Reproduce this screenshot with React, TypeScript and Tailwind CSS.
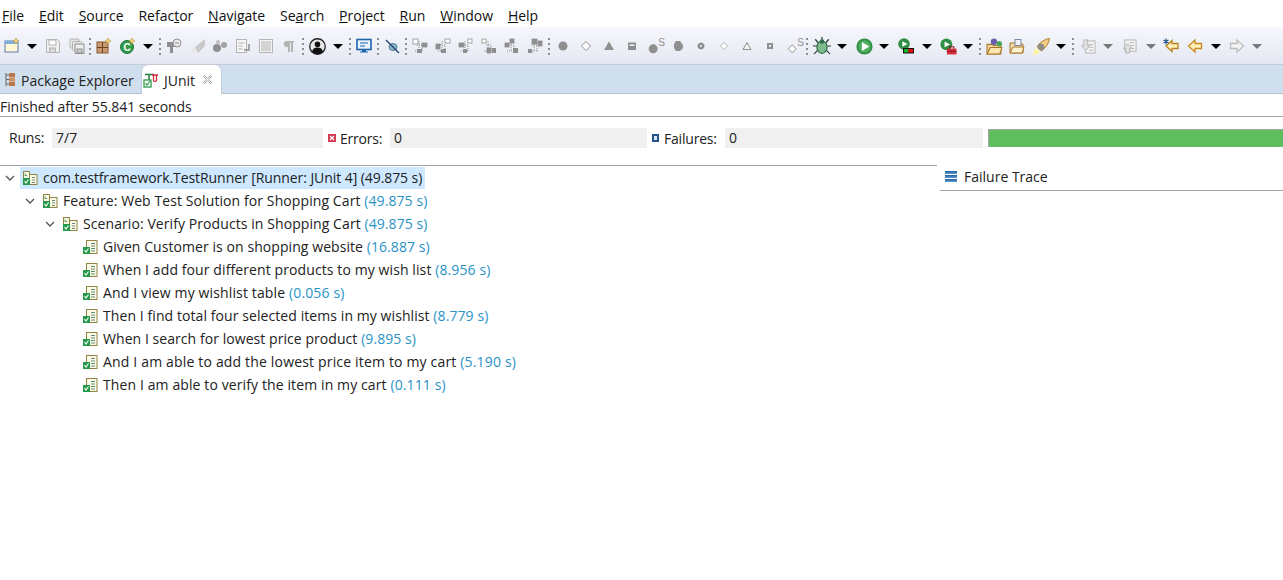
import type { ReactNode } from 'react';

const font = { fontFamily: '"Open Sans", "Noto Sans", sans-serif' };

function Ic({ children, size = 16 }: { children: ReactNode; size?: number }) {
  return (
    <svg width={size} height={size} viewBox="0 0 16 16" className="shrink-0 block">
      {children}
    </svg>
  );
}

// each slot runs from the left edge of its item to the left edge of the next one
function Slot({ w, children }: { w: string; children?: ReactNode }) {
  return <div className={`${w} shrink-0 h-full flex items-center justify-start`}>{children}</div>;
}

function Sep({ w }: { w: string }) {
  return (
    <Slot w={w}>
      <div className="flex flex-col gap-[3px] shrink-0">
        <div className="w-[2px] h-[2px] bg-[#8f8f8f]" />
        <div className="w-[2px] h-[2px] bg-[#8f8f8f]" />
        <div className="w-[2px] h-[2px] bg-[#8f8f8f]" />
        <div className="w-[2px] h-[2px] bg-[#8f8f8f]" />
      </div>
    </Slot>
  );
}

function Drop({ w, off }: { w: string; off?: boolean }) {
  return (
    <Slot w={w}>
      <svg width="10" height="5" viewBox="0 0 10 5" className="shrink-0">
        <path d="M0 0h10L5 5z" fill={off ? '#777777' : '#000000'} />
      </svg>
    </Slot>
  );
}

const Star = ({ x = 12, y = 3 }: { x?: number; y?: number }) => (
  <path
    d={`M${x} ${y - 3}l1 2 2 1-2 1-1 2-1-2-2-1 2-1z`}
    fill="#f7d774"
    stroke="#b9934a"
    strokeWidth=".6"
  />
);

const gray = '#b4b4b4';
const dark = '#8f8f8f';

const NewWin = () => (
  <Ic>
    <rect x="1" y="3" width="13" height="11" fill="#fff8d8" stroke="#5c7fa8" />
    <rect x="1" y="3" width="13" height="3" fill="#7fb0dc" />
    <Star />
  </Ic>
);
const Save = () => (
  <Ic>
    <path d="M1.500 1.500h11l2 2v11h-13z" fill="#f0f0f0" stroke={gray} />
    <rect x="4" y="2" width="7" height="5" fill="#fff" stroke={gray} />
    <rect x="4.500" y="10" width="6" height="4.500" fill="#d8d8d8" stroke={gray} />
  </Ic>
);
const SaveAll = () => (
  <Ic>
    <rect x="1" y="1" width="9" height="9" rx="1" fill="#e6e6e6" stroke={gray} />
    <rect x="3.500" y="3.500" width="9" height="9" rx="1" fill="#e6e6e6" stroke={gray} />
    <path d="M6 6h9v9.500H6z" fill="#eeeeee" stroke={dark} />
    <rect x="8" y="11" width="5" height="4" fill="#cccccc" stroke={dark} />
  </Ic>
);
const NewPkg = () => (
  <Ic>
    <rect x="1" y="4" width="11" height="11" fill="#c79a72" stroke="#8c5a33" />
    <path d="M1 9.500h11M6.500 4v11" stroke="#70401f" />
    <Star />
  </Ic>
);
const NewClass = () => (
  <Ic>
    <circle cx="7" cy="9" r="6.500" fill="#2f9a4b" stroke="#1c7a38" />
    <text x="7" y="12.500" textAnchor="middle" fontSize="10" fontWeight="700" fill="#fff" fontFamily="Liberation Sans">
      C
    </text>
    <Star />
  </Ic>
);
const Tip = () => (
  <Ic>
    <path d="M1 4h9v5H7v6H4V9H1z" fill={dark} />
    <circle cx="11" cy="5" r="4" fill="#e8e8e8" stroke={dark} />
    <path d="M9 5h4" stroke={dark} />
  </Ic>
);
const Eraser = () => (
  <Ic>
    <path d="M0 15l5-6 10-8v7l-7 7z" fill="#c9c9c9" />
    <path d="M5 9l3 6H0z" fill="#e9e9e9" />
  </Ic>
);
const Blobs = () => (
  <Ic>
    <circle cx="5" cy="10" r="4" fill={dark} />
    <circle cx="12" cy="7" r="3" fill="#a3a3a3" />
    <circle cx="6" cy="4" r="2" fill="#bcbcbc" />
  </Ic>
);
const DocArrow = () => (
  <Ic>
    <rect x="1.500" y="1.500" width="10" height="13" fill="#f6f6f6" stroke={gray} />
    <path d="M3.500 5h6M3.500 8h4M3.500 11h4" stroke={gray} />
    <path d="M9 12h5V6" fill="none" stroke={dark} strokeWidth="1.500" />
  </Ic>
);
const DocBox = () => (
  <Ic>
    <rect x="1.500" y="1.500" width="13" height="13" fill="#f4f4f4" stroke={gray} />
    <rect x="4" y="4" width="8" height="8" fill="none" stroke={gray} />
    <path d="M5 6h6M5 8h6M5 10h6" stroke={gray} />
  </Ic>
);
const Pilcrow = () => (
  <Ic>
    <path d="M5 3h8v1.500h-1V14h-2V4.500H9V14H7V9a3 3 0 0 1-2-6z" fill={gray} />
  </Ic>
);
const Avatar = () => (
  <Ic size={17}>
    <circle cx="8" cy="8" r="7.300" fill="#e8e8e8" stroke="#222" strokeWidth="1.200" />
    <circle cx="8" cy="6" r="2.600" fill="#111" />
    <path d="M2.800 13a5.300 5 0 0 1 10.400 0A7 7 0 0 1 2.800 13z" fill="#111" />
  </Ic>
);
const Monitor = () => (
  <Ic>
    <rect x="1" y="1.500" width="14" height="10" fill="#eaf2fb" stroke="#1d64a8" strokeWidth="1.600" />
    <path d="M4 5h8M4 8h5" stroke="#1d64a8" />
    <path d="M6 12h4v1.500h2v1H4v-1h2z" fill="#1d64a8" />
  </Ic>
);
const NoLink = () => (
  <Ic>
    <ellipse cx="9" cy="9" rx="4" ry="3.500" fill="#8fb7cc" stroke="#4f7f9a" />
    <path d="M2 2l13 13" stroke="#1f3f70" strokeWidth="1.300" />
  </Ic>
);

const hierBoxes = [
  [1, 1, 5, 5, 10, 5, 5, 4, 5, 11, 5, 4],
  [1, 6, 4, 5, 10, 1, 5, 4, 6, 11, 5, 4],
  [10, 1, 4, 4, 1, 5, 5, 4, 5, 11, 4, 4],
  [1, 1, 4, 4, 6, 10, 4, 5, 11, 10, 4, 5],
  [6, 1, 4, 4, 1, 5, 4, 4, 9, 10, 5, 5],
  [5, 1, 5, 5, 11, 3, 4, 5, 1, 11, 4, 4],
];

const Hier = ({ v }: { v: number }) => {
  const b = hierBoxes[v];
  return (
    <Ic>
      <path d="M5 7h5v6M7 3v10M3 13h8" fill="none" stroke={dark} strokeDasharray="1 1" />
      <rect x={b[0]} y={b[1]} width={b[2]} height={b[3]} fill={v === 0 || v === 3 || v === 2 ? '#fff' : dark} stroke={dark} strokeWidth=".8" />
      <rect x={b[4]} y={b[5]} width={b[6]} height={b[7]} fill={v === 1 ? '#fff' : dark} stroke={dark} strokeWidth=".8" />
      <rect x={b[8]} y={b[9]} width={b[10]} height={b[11]} fill={dark} />
    </Ic>
  );
};
const Bug = () => (
  <Ic size={18}>
    <path d="M2 2l4 5M14 2l-4 5M0 8h4M16 8h-4M1 15l4-4M15 15l-4-4M8 0v3" stroke="#2b3f36" strokeWidth="1.100" />
    <ellipse cx="8" cy="9" rx="4.500" ry="5.500" fill="#7fb98c" stroke="#2b6b45" />
    <circle cx="8" cy="4" r="2" fill="#2f6d4a" />
  </Ic>
);
const RunBig = () => (
  <Ic size={17}>
    <circle cx="8" cy="8" r="7.600" fill="#2f8f45" />
    <circle cx="8" cy="8" r="5.800" fill="#4fae5f" />
    <path d="M5.500 3.800L12.500 8l-7 4.200z" fill="#fff" />
  </Ic>
);
const RunCov = () => (
  <Ic>
    <circle cx="6" cy="6" r="5.800" fill="#2f8f45" />
    <path d="M4.300 3.200L9.500 6l-5.200 2.800z" fill="#fff" />
    <rect x="5" y="10" width="11" height="5.500" fill="#111" />
    <rect x="6" y="11" width="4.500" height="3.500" fill="#17b52c" />
    <rect x="10.500" y="11" width="4.500" height="3.500" fill="#e01010" />
  </Ic>
);
const RunTool = () => (
  <Ic size={17}>
    <circle cx="6" cy="6" r="5.600" fill="#2f8f45" />
    <path d="M4.300 3.200L9.500 6l-5.200 2.800z" fill="#fff" />
    <rect x="6.500" y="10" width="9" height="5.500" fill="#d62f3e" />
    <path d="M9 10V8.300h4V10M6.500 12.500h9" fill="none" stroke="#8f1020" />
  </Ic>
);
const FolderOrb = () => (
  <Ic size={17}>
    <path d="M1 6h5l1 1h7v8H1z" fill="#f5d79a" stroke="#a87626" />
    <path d="M1 15l3-6h11l-2 6z" fill="#fbe4ad" stroke="#a87626" />
    <circle cx="7.500" cy="3.500" r="3" fill="#6a5fb0" />
    <circle cx="12.500" cy="5.500" r="2.600" fill="#4ea35a" />
  </Ic>
);
const FolderOpen = () => (
  <Ic>
    <path d="M1 5h5l1 1h7v9H1z" fill="#f5dcae" stroke="#a87626" />
    <rect x="6" y="1.500" width="6" height="6" fill="#eef2f8" stroke="#7c8aa8" />
    <path d="M1 15l3-6h11l-2 6z" fill="#fdf0d0" stroke="#a87626" />
  </Ic>
);
const Rocket = () => (
  <Ic size={17}>
    <path d="M15.500 .5c-4.500 .5-8 3-11.500 7.500l4 4c4.500-3.500 7-7 7.500-11.500z" fill="#f4cf88" stroke="#b9873a" />
    <circle cx="7.500" cy="8.500" r="3" fill="#8c8c8c" />
    <path d="M0 16c0-3 1-5 3.500-6.500l3 3c-1.500 2.500-3.500 3.500-6.500 3.500z" fill="#fff2a8" />
  </Ic>
);
const DownDoc = () => (
  <Ic size={15}>
    <rect x="5" y="2" width="10" height="13" fill="#f2f2f2" stroke={gray} />
    <path d="M8 6h5M9 9h4M9 12h4" stroke={gray} />
    <path d="M3 1h4v6h2.500L5 12 .5 7H3z" fill="#e2e2e2" stroke={gray} />
  </Ic>
);
const UpDoc = () => (
  <Ic size={15}>
    <rect x="3" y="1" width="12" height="12" fill="#f2f2f2" stroke={gray} />
    <path d="M8 4h5M9 7h4M9 10h4" stroke={gray} />
    <path d="M4 15V10H1.500L6 5l4.500 5H8v5z" fill="#e2e2e2" stroke={gray} />
  </Ic>
);
const Arrow = ({ fill, stroke, flip }: { fill: string; stroke: string; flip?: boolean }) => (
  <Ic>
    <path
      d={flip ? 'M1.500 5.500H8V2l6.500 6L8 14v-3.500H1.500z' : 'M14.500 5.500H8V2L1.500 8 8 14v-3.500h6.500z'}
      fill={fill}
      stroke={stroke}
      strokeWidth="1.300"
    />
  </Ic>
);
const ArrowStar = () => (
  <Ic>
    <path d="M15 5.500H9V2.500L3 8l6 5.500v-3h6z" fill="#fff0b8" stroke="#b9821e" strokeWidth="1.300" />
    <path d="M3 .5v6M.5 2l5 3M5.500 2l-5 3" stroke="#1f4f86" strokeWidth="1.100" />
  </Ic>
);

const marks: ReactNode[] = [
  <circle key="a" cx="8" cy="8" r="4.500" fill={dark} />,
  <path key="b" d="M8 3.500L12.500 8 8 12.500 3.500 8z" fill="#fff" stroke={dark} />,
  <path key="c" d="M8 3.500l5 8.500H3z" fill={dark} />,
  <path key="d" d="M4 4.500h8v7.500H4z M5.500 6.500v1.500h5V6.500z" fill={dark} fillRule="evenodd" />,
];
const smalls: ReactNode[] = [
  <path key="e" d="M4 6l2-3 4 0 3 4v3l-3 3-4 0-2-3z" fill={dark} />,
  <path key="f" d="M8 4.500a3.500 3.500 0 1 0 .01 0zM8 7a1 1 0 1 1-.01 0z" fill={dark} fillRule="evenodd" />,
  <path key="g" d="M8 4.500L11.500 8 8 11.500 4.500 8z" fill="#fff" stroke={gray} />,
  <path key="h" d="M8 4.500L12 11.500H4z" fill="#f3f3f3" stroke={dark} />,
  <path key="i" d="M5 5h6v6H5z M7 7v2h2V7z" fill={dark} fillRule="evenodd" />,
];

function SIcon({ solid }: { solid?: boolean }) {
  return (
    <Ic size={18}>
      {solid ? (
        <circle cx="5.500" cy="10.500" r="4" fill={dark} />
      ) : (
        <path d="M5.500 7L9 10.500 5.500 14 2 10.500z" fill="#fff" stroke={gray} />
      )}
      <text x="10" y="8" fontSize="9" fill={dark} fontFamily="Liberation Sans">
        S
      </text>
    </Ic>
  );
}

function Toolbar() {
  return (
    <div className="h-[38px] pl-[4px] pt-[1px] flex items-center border-b border-[#c6cad4] bg-gradient-to-b from-[#f6f7fc] to-[#e5e8f3] overflow-hidden">
      <Slot w="w-[23px]"><NewWin /></Slot>
      <Drop w="w-[18px]" />
      <Slot w="w-[24px]"><Save /></Slot>
      <Slot w="w-[20px]"><SaveAll /></Slot>
      <Sep w="w-[7px]" />
      <Slot w="w-[24px]"><NewPkg /></Slot>
      <Slot w="w-[23px]"><NewClass /></Slot>
      <Drop w="w-[16px]" />
      <Sep w="w-[7px]" />
      <Slot w="w-[24px]"><Tip /></Slot>
      <Slot w="w-[22px]"><Eraser /></Slot>
      <Slot w="w-[23px]"><Blobs /></Slot>
      <Slot w="w-[23px]"><DocArrow /></Slot>
      <Slot w="w-[23px]"><DocBox /></Slot>
      <Slot w="w-[21px]"><Pilcrow /></Slot>
      <Sep w="w-[7px]" />
      <Slot w="w-[24px]"><Avatar /></Slot>
      <Drop w="w-[16px]" />
      <Sep w="w-[7px]" />
      <Slot w="w-[21px]"><Monitor /></Slot>
      <Sep w="w-[7px]" />
      <Slot w="w-[21px]"><NoLink /></Slot>
      <Sep w="w-[7px]" />
      <Slot w="w-[23px]"><Hier v={0} /></Slot>
      <Slot w="w-[23px]"><Hier v={1} /></Slot>
      <Slot w="w-[23px]"><Hier v={2} /></Slot>
      <Slot w="w-[23px]"><Hier v={3} /></Slot>
      <Slot w="w-[23px]"><Hier v={4} /></Slot>
      <Slot w="w-[21px]"><Hier v={5} /></Slot>
      <Sep w="w-[7px]" />
      <Slot w="w-[23px]"><Ic>{marks[0]}</Ic></Slot>
      <Slot w="w-[23px]"><Ic>{marks[1]}</Ic></Slot>
      <Slot w="w-[23px]"><Ic>{marks[2]}</Ic></Slot>
      <Slot w="w-[23px]"><Ic>{marks[3]}</Ic></Slot>
      <Slot w="w-[23px]"><SIcon solid /></Slot>
      <Slot w="w-[23px]"><Ic>{smalls[0]}</Ic></Slot>
      <Slot w="w-[23px]"><Ic>{smalls[1]}</Ic></Slot>
      <Slot w="w-[23px]"><Ic>{smalls[2]}</Ic></Slot>
      <Slot w="w-[23px]"><Ic>{smalls[3]}</Ic></Slot>
      <Slot w="w-[24px]"><Ic>{smalls[4]}</Ic></Slot>
      <Slot w="w-[20px]"><SIcon /></Slot>
      <Sep w="w-[7px]" />
      <Slot w="w-[24px]"><Bug /></Slot>
      <Drop w="w-[19px]" />
      <Slot w="w-[23px]"><RunBig /></Slot>
      <Drop w="w-[19px]" />
      <Slot w="w-[24px]"><RunCov /></Slot>
      <Drop w="w-[18px]" />
      <Slot w="w-[23px]"><RunTool /></Slot>
      <Drop w="w-[16px]" />
      <Sep w="w-[7px]" />
      <Slot w="w-[23px]"><FolderOrb /></Slot>
      <Slot w="w-[24px]"><FolderOpen /></Slot>
      <Slot w="w-[23px]"><Rocket /></Slot>
      <Drop w="w-[16px]" />
      <Sep w="w-[9px]" />
      <Slot w="w-[22px]"><DownDoc /></Slot>
      <Drop w="w-[19px]" off />
      <Slot w="w-[24px]"><UpDoc /></Slot>
      <Drop w="w-[17px]" off />
      <Slot w="w-[24px]"><ArrowStar /></Slot>
      <Slot w="w-[24px]"><Arrow fill="#fff0b8" stroke="#c98a1e" /></Slot>
      <Drop w="w-[18px]" />
      <Slot w="w-[23px]"><Arrow fill="#f4f4f4" stroke="#bdbdbd" flip /></Slot>
      <Drop w="w-[20px]" off />
    </div>
  );
}

const Menu = () => (
  <div className="h-[27px] pt-[3px] flex items-center pl-[2px] gap-[14.8px] text-[14px] text-[#111]">
    <span><u>F</u>ile</span>
    <span><u>E</u>dit</span>
    <span><u>S</u>ource</span>
    <span>Refac<u>t</u>or</span>
    <span><u>N</u>avigate</span>
    <span>Se<u>a</u>rch</span>
    <span><u>P</u>roject</span>
    <span><u>R</u>un</span>
    <span><u>W</u>indow</span>
    <span><u>H</u>elp</span>
  </div>
);

const JUnitIcon = () => (
  <Ic>
    <path d="M2 2.500h9M6 2.500V8" stroke="#2d7d46" strokeWidth="1.500" />
    <rect x="1" y="8" width="7" height="7" fill="#fff" stroke="#2f9a4b" strokeWidth="1.300" />
    <path d="M2.500 11.500l1.500 1.500 3-4" fill="none" stroke="#2f9a4b" strokeWidth="1.200" />
    <path d="M9 3h6M10.500 3v5a1.500 1.500 0 0 0 3 0V3" fill="none" stroke="#d22d3d" strokeWidth="1.300" />
  </Ic>
);

const Tabs = () => (
  <div className="h-[29px] flex items-stretch bg-[#d0dfee] border-b border-[#b7c2d1] text-[14px] text-[#222]">
    <div className="w-[141px] flex items-center pl-[5px] gap-[6px]">
      <svg width="10" height="13" viewBox="0 0 10 13" className="shrink-0">
        <path d="M1 0v13M1 2h3M1 6.500h3M1 11h3" stroke="#666" />
        <rect x="4" y="0" width="6" height="4" fill="#b5784a" />
        <rect x="4" y="4.500" width="6" height="4" fill="#c98f5e" />
        <rect x="4" y="9" width="6" height="4" fill="#b5784a" />
      </svg>
      <span className="pt-[2px] tracking-[0.05px]">Package Explorer</span>
    </div>
    <div className="w-[81px] h-[29px] bg-white rounded-t-[7px] border-x border-[#c2cedd] flex items-center pl-[1px]">
      <JUnitIcon />
      <span className="ml-[5px] pt-[2px]">JUnit</span>
      <svg width="11" height="11" viewBox="0 0 11 11" className="ml-[7px] shrink-0">
        <path d="M1.500 2.500l1-1L5.500 4.300l3-2.800 1 1-2.800 3 2.800 3-1 1-3-2.800-3 2.800-1-1 2.800-3z" fill="none" stroke="#8f8f8f" strokeWidth=".9" />
      </svg>
    </div>
  </div>
);

const Stats = () => (
  <div className="pt-[11px] h-[48px] flex items-start text-[14px] text-[#222]">
    <span className="w-[52px] pl-[9px] h-[20px] leading-[20px] tracking-[-0.2px]">Runs:</span>
    <div className="w-[271px] h-[20px] leading-[20px] bg-[#f0f0f0] pl-[4px]">7/7</div>
    <div className="w-[67px] h-[20px] flex items-center pl-[5px] gap-[4px]">
      <svg width="8" height="8" viewBox="0 0 8 8" className="shrink-0">
        <rect width="8" height="8" fill="#d33a52" />
        <path d="M2 2l4 4M6 2L2 6" stroke="#fff" strokeWidth="1.200" />
      </svg>
      <span className="tracking-[-0.2px]">Errors:</span>
    </div>
    <div className="w-[257px] h-[20px] leading-[20px] bg-[#f0f0f0] pl-[4px]">0</div>
    <div className="w-[78px] h-[20px] flex items-center pl-[5px] gap-[5px]">
      <svg width="7" height="8" viewBox="0 0 7 8" className="shrink-0">
        <rect width="7" height="8" fill="#24548c" />
        <rect x="2" y="2" width="3" height="4" fill="#dce7f3" />
      </svg>
      <span className="tracking-[-0.2px]">Failures:</span>
    </div>
    <div className="w-[258px] h-[20px] leading-[20px] bg-[#f0f0f0] pl-[4px]">0</div>
    <div className="ml-[5px] flex-1 h-[18px] mt-[1px] bg-[#5fbd60] border-l border-t border-[#a3a3a3]" />
  </div>
);

const SuiteIcon = () => (
  <Ic>
    <rect x="1.500" y="1.500" width="6" height="7" fill="#fdfbe8" stroke="#8f8443" />
    <rect x="7.500" y="4.500" width="7.500" height="10" fill="#fdfbe8" stroke="#8f8443" />
    <path d="M10 7.500h3M10 10h3M10 12.500h3" stroke="#6d8d72" />
    <path d="M3 3.500v2h2" stroke="#4d9a5e" fill="none" />
    <rect x="1" y="8" width="7" height="7" fill="#25994b" />
    <path d="M2.500 11l1.500 2 2.500-3.500" fill="none" stroke="#fff" strokeWidth="1.100" />
  </Ic>
);

const LeafIcon = () => (
  <Ic>
    <rect x="4.500" y="1.500" width="10.500" height="13" fill="#fdfbe8" stroke="#8f8443" />
    <path d="M9 4.500h4M9 7h4M9 9.500h4M9 12h4" stroke="#5d8d72" />
    <rect x="1" y="8" width="7" height="7" fill="#25994b" />
    <path d="M2.500 11l1.500 2 2.500-3.500" fill="none" stroke="#fff" strokeWidth="1.100" />
  </Ic>
);

const Chevron = () => (
  <svg width="10" height="6" viewBox="0 0 10 6" className="shrink-0">
    <path d="M1 1l4 4 4-4" fill="none" stroke="#555" strokeWidth="1.300" />
  </svg>
);

function Row({ label, time, track }: { label: string; time: string; track: string }) {
  return (
    <div className="h-[23px] flex items-center pl-[82px] gap-[5px] whitespace-nowrap">
      <LeafIcon />
      <span className={track}>
        {label} <span className="text-[#2a92c6]">({time})</span>
      </span>
    </div>
  );
}

const leaves = [
  { label: 'Given Customer is on shopping website', time: '16.887 s', track: 'tracking-[0.07px]' },
  { label: 'When I add four different products to my wish list', time: '8.956 s', track: 'tracking-[0.1px]' },
  { label: 'And I view my wishlist table', time: '0.056 s', track: 'tracking-[0.135px]' },
  { label: 'Then I find total four selected items in my wishlist', time: '8.779 s', track: 'tracking-[0.08px]' },
  { label: 'When I search for lowest price product', time: '9.895 s', track: 'tracking-[0.06px]' },
  { label: 'And I am able to add the lowest price item to my cart', time: '5.190 s', track: 'tracking-[0.17px]' },
  { label: 'Then I am able to verify the item in my cart', time: '0.111 s', track: 'tracking-[0.11px]' },
];

const Tree = () => (
  <div className="w-[937px] border-t border-[#a3a3a3] text-[14px] text-[#222]">
    <div className="h-[23px] flex items-center pl-[5px] whitespace-nowrap">
      <Chevron />
      <div className="ml-[5px] w-[405px] h-[22px] bg-[#cde8ff] flex items-center pl-[2px] gap-[5px]">
        <SuiteIcon />
        <span className="tracking-[-0.07px]">com.testframework.TestRunner [Runner: JUnit 4] (49.875 s)</span>
      </div>
    </div>
    <div className="h-[23px] flex items-center pl-[25px] whitespace-nowrap">
      <Chevron />
      <div className="ml-[7px] flex items-center gap-[5px]">
        <SuiteIcon />
        <span className="tracking-[0.09px]">
          Feature: Web Test Solution for Shopping Cart <span className="text-[#2a92c6]">(49.875 s)</span>
        </span>
      </div>
    </div>
    <div className="h-[23px] flex items-center pl-[45px] whitespace-nowrap">
      <Chevron />
      <div className="ml-[7px] flex items-center gap-[5px]">
        <SuiteIcon />
        <span className="tracking-[0.08px]">
          Scenario: Verify Products in Shopping Cart <span className="text-[#2a92c6]">(49.875 s)</span>
        </span>
      </div>
    </div>
    {leaves.map((l) => (
      <Row key={l.label} label={l.label} time={l.time} track={l.track} />
    ))}
  </div>
);

const Trace = () => (
  <div className="ml-[3px] flex-1">
    <div className="h-[26px] pb-[2px] flex items-center pl-[5px] gap-[7px] border-b border-[#a3a3a3] text-[14px] text-[#222]">
      <div className="flex flex-col gap-[1px] shrink-0">
        <div className="w-[12px] h-[3px] bg-gradient-to-b from-[#1f5f9f] to-[#5f9fd0]" />
        <div className="w-[12px] h-[3px] bg-gradient-to-b from-[#1f5f9f] to-[#5f9fd0]" />
        <div className="w-[12px] h-[3px] bg-gradient-to-b from-[#1f5f9f] to-[#5f9fd0]" />
      </div>
      <span>Failure Trace</span>
    </div>
  </div>
);

export default function App() {
  return (
    <div className="w-full h-screen bg-white overflow-hidden" style={font}>
      <Menu />
      <Toolbar />
      <Tabs />
      <div className="h-[23px] pt-[2px] border-b border-[#a3a3a3] flex items-center text-[14px] text-[#222] tracking-[-0.07px]">
        Finished after 55.841 seconds
      </div>
      <Stats />
      <div className="flex">
        <Tree />
        <Trace />
      </div>
    </div>
  );
}
